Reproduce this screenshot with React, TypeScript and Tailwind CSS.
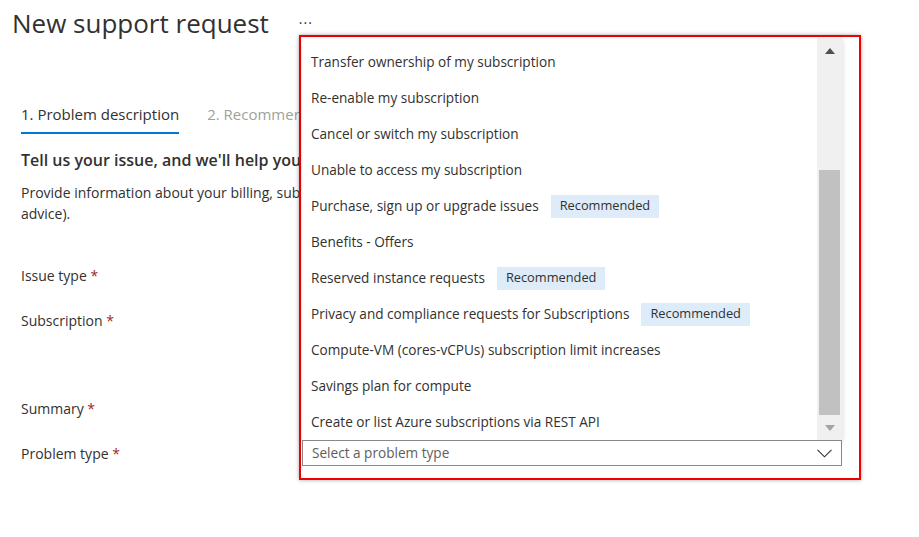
type Option = {
    label: string;
    recommended?: boolean;
};

const options: Option[] = [
    { label: "Transfer ownership of my subscription" },
    { label: "Re-enable my subscription" },
    { label: "Cancel or switch my subscription" },
    { label: "Unable to access my subscription" },
    { label: "Purchase, sign up or upgrade issues", recommended: true },
    { label: "Benefits - Offers" },
    { label: "Reserved instance requests", recommended: true },
    { label: "Privacy and compliance requests for Subscriptions", recommended: true },
    { label: "Compute-VM (cores-vCPUs) subscription limit increases" },
    { label: "Savings plan for compute" },
    { label: "Create or list Azure subscriptions via REST API" },
];

function Label({ text }: { text: string }) {
    return (
        <span className="text-[14px] text-[#323130]">
            {text} <span className="text-[#a4262c]">*</span>
        </span>
    );
}

function ProblemTypeDropdown() {
    return (
        <div className="absolute left-[299px] top-[35px] w-[562px] h-[445px] border-2 border-[#f20000] shadow-[0_0_4px_rgba(0,0,0,0.35)]">
            <div className="ml-[1px] mt-[1px] w-[540px] h-[402px] bg-white shadow-[0_2px_6px_rgba(0,0,0,0.18)] flex">
                <ul className="flex-1 pt-[6px]">
                    {options.map(({ label, recommended }) => (
                        <li key={label} className="h-[36px] flex items-center pl-[9px] text-[13.6px] text-[#323130]">
                            {label}
                            {recommended ? (
                                <span className="ml-[12px] h-[23px] px-[9px] flex items-center bg-[#deecf9] text-[12.8px]">
                                    Recommended
                                </span>
                            ) : null}
                        </li>
                    ))}
                </ul>
                <div className="w-[25px] bg-[#f0f0f0] flex flex-col items-center">
                    <div className="h-[26px] flex items-center justify-center">
                        <svg width="10" height="6" viewBox="0 0 10 6">
                            <path d="M0 6 L5 0 L10 6 Z" fill="#505050" />
                        </svg>
                    </div>
                    <div className="mt-[106px] w-[21px] h-[245px] bg-[#c1c1c1]" />
                    <div className="h-[25px] flex items-center justify-center">
                        <svg width="10" height="6" viewBox="0 0 10 6">
                            <path d="M0 0 L10 0 L5 6 Z" fill="#a3a3a3" />
                        </svg>
                    </div>
                </div>
            </div>
            <div className="ml-[1px] w-[540px] h-[26px] border border-[#8a8886] bg-white flex items-center justify-between pl-[9px] pr-[9px]">
                <span className="text-[13.6px] text-[#605e5c]">Select a problem type</span>
                <svg width="15" height="9" viewBox="0 0 15 9" fill="none">
                    <path d="M0.5 0.8 L7.5 7.8 L14.5 0.8" stroke="#323130" strokeWidth="1.1" />
                </svg>
            </div>
        </div>
    );
}

export default function App() {
    return (
        <div className="relative w-[919px] h-[537px] bg-white overflow-hidden font-['Open_Sans',sans-serif] text-[#323130]">
            <div className="flex items-center pl-[12px] pt-[6px] h-[40px]">
                <h1 className="text-[26px] leading-[36px] font-normal">New support request</h1>
                <span className="ml-[30px] text-[14px] tracking-[1px] -mt-[10px]">...</span>
            </div>

            {/* form column, cut off where the open dropdown covers it */}
            <div className="w-[300px] overflow-hidden whitespace-nowrap px-[21px]">
                <nav className="mt-[63px] flex gap-[28px] text-[15px]">
                    <div className="pb-[6px] border-b-2 border-[#0078d4] text-[#323130] font-medium">1. Problem description</div>
                    <div className="text-[#a19f9d]">2. Recommended solution</div>
                </nav>

                <h2 className="mt-[14px] text-[16px] font-semibold leading-[24px]">
                    Tell us your issue, and we'll help you resolve it.
                </h2>
                <p className="mt-[10px] text-[14px] leading-[21px]">
                    Provide information about your billing, subscription, quota management, or technical issue
                    <br />
                    advice).
                </p>

                <div className="mt-[40px] flex flex-col">
                    <div className="h-[24px] flex items-center">
                        <Label text="Issue type" />
                    </div>
                    <div className="mt-[21px] h-[24px] flex items-center">
                        <Label text="Subscription" />
                    </div>
                    <div className="mt-[64px] h-[24px] flex items-center">
                        <Label text="Summary" />
                    </div>
                    <div className="mt-[21px] h-[24px] flex items-center">
                        <Label text="Problem type" />
                    </div>
                </div>
            </div>

            <ProblemTypeDropdown />
        </div>
    );
}
